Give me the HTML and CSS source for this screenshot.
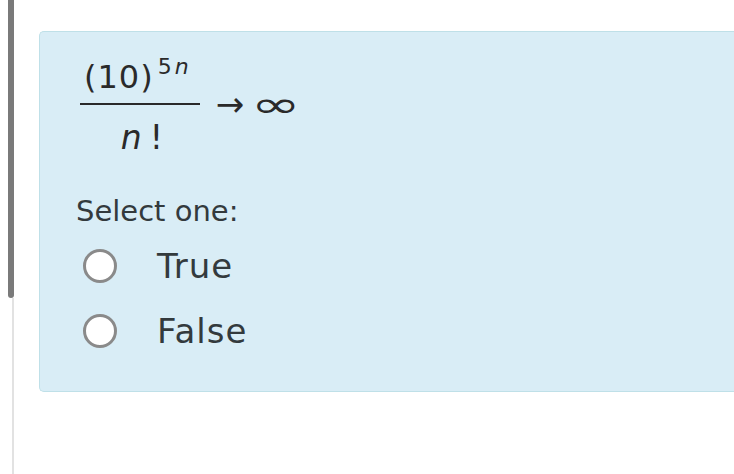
FILE: index.html
```html
<!DOCTYPE html>
<html>
<head>
<meta charset="utf-8">
<link rel="stylesheet" href="styles.css">
</head>
<body>
<div class="page">
  <div class="gutter">
    <div class="thumb"></div>
    <div class="track"></div>
  </div>
  <div class="main">
    <div class="question">
      <div class="formula">
        <span class="frac">
          <span class="num">(10)<sup class="sup">5<i>n</i></sup></span>
          <span class="den"><i>n</i>!</span>
        </span>
        <span class="arrow">→</span>
        <span class="inf">∞</span>
      </div>
      <div class="prompt">Select one:</div>
      <div class="options">
        <label class="opt"><span class="radio"></span><span class="lbl">True</span></label>
        <label class="opt"><span class="radio"></span><span class="lbl">False</span></label>
      </div>
    </div>
  </div>
</div>
</body>
</html>
```

FILE: styles.css
```css
html, body {
  margin: 0;
  padding: 0;
  background: #ffffff;
  overflow: hidden;
}
.page {
  display: flex;
  width: 734px;
  height: 474px;
  font-family: "DejaVu Sans", Verdana, sans-serif;
  color: #333a3d;
}
.gutter {
  display: flex;
  flex-direction: column;
  width: 6px;
  margin-left: 8px;
  flex: none;
}
.thumb {
  height: 298px;
  background: #7a7a7a;
  border-radius: 0 0 3px 3px;
}
.track {
  flex: 1;
  width: 2px;
  margin-left: 4px;
  background: #e2e2e2;
}
.main {
  flex: 1;
  overflow: hidden;
  padding-left: 25px;
  padding-top: 31px;
}
.question {
  width: 720px;
  height: 361px;
  box-sizing: border-box;
  background: #d9edf6;
  border: 1px solid #bfe0e8;
  border-right: none;
  border-radius: 5px 0 0 5px;
  padding: 20px 0 0 36px;
}
.formula {
  display: flex;
  align-items: flex-start;
  padding-left: 4px;
  height: 106px;
}
.frac {
  display: inline-flex;
  flex-direction: column;
  align-items: center;
  font-size: 32px;
  color: #2a2a2a;
  padding-top: 5px;
}
.num {
  padding: 0 8px 6px 4px;
  border-bottom: 2px solid #2a2a2a;
  line-height: 40px;
  letter-spacing: 1px;
}
.sup {
  font-size: 22px;
  vertical-align: 14px;
  line-height: 0;
  margin-left: 4px;
  letter-spacing: 3px;
}
.den {
  line-height: 42px;
  padding-top: 12px;
  padding-left: 12px;
  letter-spacing: 8px;
  font-size: 33px;
}
.arrow {
  font-size: 34px;
  margin-left: 16px;
  margin-top: 35px;
  color: #2a2a2a;
  line-height: 1;
}
.inf {
  display: inline-block;
  font-size: 40px;
  margin-left: 15px;
  margin-top: 32px;
  color: #2a2a2a;
  line-height: 1;
  transform: scale(1.5, 0.9);
}
.prompt {
  font-size: 29px;
  margin-top: 37px;
  line-height: 32px;
}
.options {
  display: flex;
  flex-direction: column;
  gap: 31px;
  margin-top: 22px;
  padding-left: 7px;
}
.opt {
  display: flex;
  align-items: center;
  height: 34px;
}
.radio {
  width: 28px;
  height: 28px;
  border: 3px solid #8a8a8a;
  border-radius: 50%;
  background: #ffffff;
  flex: none;
}
.lbl {
  font-size: 34px;
  letter-spacing: 1px;
  margin-left: 40px;
}
```
